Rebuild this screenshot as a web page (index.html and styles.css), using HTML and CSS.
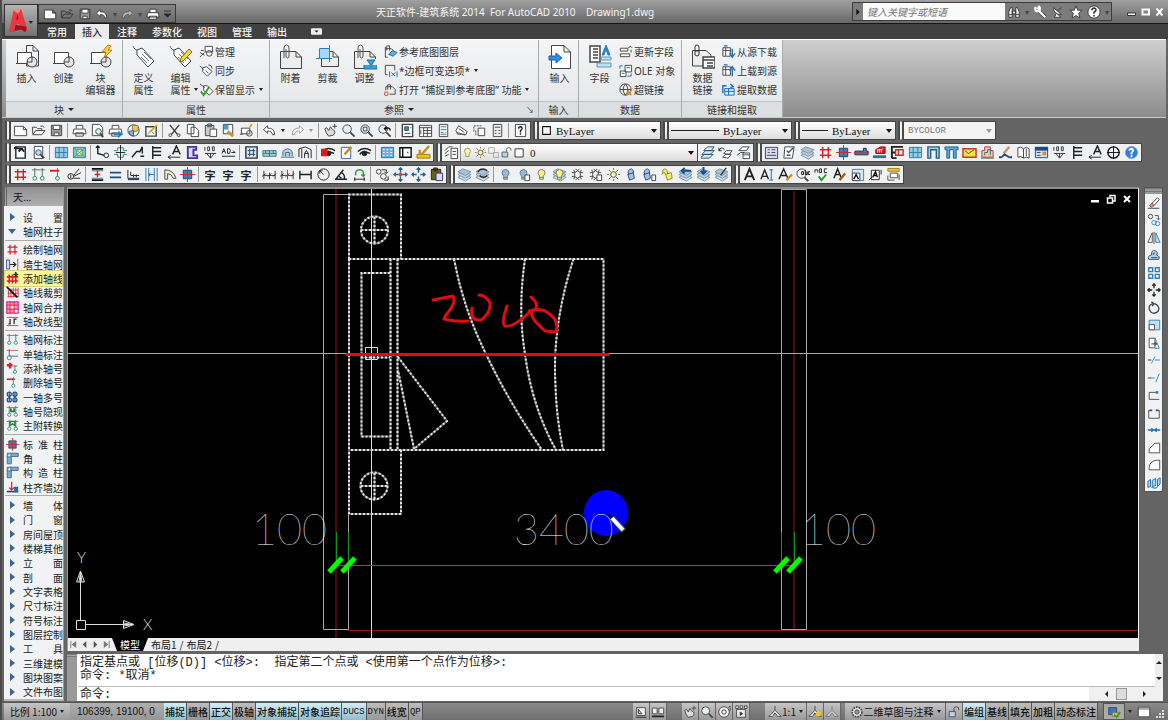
FILE: index.html
```html
<!DOCTYPE html>
<html lang="zh-CN">
<head>
<meta charset="utf-8">
<title>天正软件-建筑系统 2014 For AutoCAD 2010 Drawing1.dwg</title>
<link rel="stylesheet" href="styles.css">
</head>
<body>
<svg class="sprite" aria-hidden="true">
<symbol id="new" viewBox="0 0 16 16"><path fill="#fff" d="M1.500 3.500H11L14.500 7V13.500H1.500ZM11 3.500V7H14.500"/></symbol>
<symbol id="open" viewBox="0 0 16 16"><path d="M2 12.500L1.500 4.500H5.500L7 6H11.500V8M2 12.500L5 8H15L11.500 12.500ZM10 3.500Q13 2 14 5"/></symbol>
<symbol id="save" viewBox="0 0 16 16"><path fill="#9a9a9a" d="M2.500 2.500H13.500V13.500H2.500Z"/><path fill="#fff" d="M4.500 2.500H11.500V7H4.500ZM5.500 10.500H10.500V13.500H5.500Z"/></symbol>
<symbol id="print" viewBox="0 0 16 16"><path fill="#fff" d="M4.500 6V2.500H11.500V6M2 6.500H14L15 11.500H1ZM4 10.500H12V14H4Z"/></symbol>
<symbol id="undo" viewBox="0 0 16 16"><path fill="#fff" d="M1.500 7L6 3V5.500Q13.500 5 13.500 12.500H11Q11 8.500 6 8.500V11Z"/></symbol>
<symbol id="redo" viewBox="0 0 16 16"><path fill="#fff" d="M14.500 7L10 3V5.500Q2.500 5 2.500 12.500H5Q5 8.500 10 8.500V11Z"/></symbol>
<symbol id="zoom" viewBox="0 0 16 16"><circle fill="#e8f2fa" cx="6.500" cy="6.500" r="4.500"/><path stroke-width="2" d="M10 10L14.500 14.500"/></symbol>
<symbol id="pan" viewBox="0 0 16 16"><path fill="#ddd" d="M2 6L4 5L6 8L8 4L10 7L12 8Q14 10 11 13L6 14Q3 11 2 6Z"/><path d="M12.500 1V6M10 3.500H15"/></symbol>
<symbol id="layers" viewBox="0 0 16 16"><g stroke="#7a98ad"><path fill="#cfdce6" d="M1 11L6 8L15 11L9 15Z"/><path fill="#bfd0de" d="M1 8L6 5L15 8L9 12Z"/><path fill="#a9c2d4" d="M1 5L6 2L15 5L9 9Z"/></g></symbol>
<symbol id="bulb" viewBox="0 0 16 16"><path d="M6 10Q3 6 5 4Q8 1 11 4Q13 6 10 10V13H6ZM6 11H10" stroke="#777"/></symbol>
<symbol id="hash" viewBox="0 0 16 16"><path stroke="#d3232c" stroke-width="1.500" d="M5 2V14M11 2V14M2 5H14M2 11H14"/></symbol>
<symbol id="column" viewBox="0 0 16 16"><path fill="#3f7db8" stroke="#245" d="M3.500 3.500H12.500V12.500H3.500Z"/><path stroke="#d3232c" d="M8 0V16M0 8H16"/></symbol>
<symbol id="pins" viewBox="0 0 16 16"><path stroke="#c44" d="M1 3H15"/><path stroke="#2a806a" d="M4 1V10M12 1V10"/><g stroke="#2a806a"><circle cx="4" cy="12" r="2"/><circle cx="12" cy="12" r="2"/></g></symbol>
<symbol id="dim" viewBox="0 0 16 16"><path stroke="#333" d="M2 4V13M14 4V13M2 9H14M8 6V13M0 10L4 7M6 10L10 7M12 10L15 7"/></symbol>
<symbol id="chair" viewBox="0 0 16 16"><path stroke="#222" stroke-width="1.500" d="M4 1V15M4 3H13M4 7H13M4 11H13"/></symbol>
<symbol id="markA" viewBox="0 0 16 16"><path stroke="#222" stroke-width="1.500" d="M6 10L10 1L14 10M8 7H12"/><path stroke="#222" d="M1 13H14M1 13L4 11M1 13L4 15"/></symbol>
<symbol id="level" viewBox="0 0 16 16"><path stroke="#333" d="M2 2V6M5 2H7V6H5ZM10 2H12V6H10ZM2 9H14M4 9L8 14L12 9M8 9V14"/></symbol>
<symbol id="window" viewBox="0 0 16 16"><path fill="#8fcbe6" stroke="#367c9d" d="M1.500 2.500H14.500V13.500H1.500ZM5.500 2V14M10.500 2V14M1 8H14"/></symbol>
<symbol id="sun" viewBox="0 0 16 16"><circle fill="#fff6a0" cx="8" cy="8" r="3"/><path stroke="#776b3a" d="M8 1V3M8 13V15M1 8H3M13 8H15M3 3L5 5M11 11L13 13M3 13L5 11M11 5L13 3"/></symbol>
<symbol id="lock" viewBox="0 0 16 16"><path fill="#bcd2e5" stroke="#356" d="M2.500 7.500H9.500V13.500H2.500Z"/><path d="M8 7V4Q8 2 11 2Q14 2 13.500 6"/></symbol>
<symbol id="snow" viewBox="0 0 16 16"><path d="M6 2L8 4L10 2M6 14L8 12L10 14M2 6L5 6L4 3M14 10L11 10L12 13M2 10L5 10L4 13M14 6L11 6L12 3M8 4L5 6V10L8 12L11 10V6Z"/></symbol>
<symbol id="eye" viewBox="0 0 16 16"><path stroke="#222" stroke-width="1.500" d="M1 7Q7 1 15 6M3 10Q5 5 14 9"/><circle fill="#222" stroke="#222" cx="8" cy="9" r="2.500"/></symbol>
<symbol id="sheet" viewBox="0 0 16 16"><path fill="#eef4f8" d="M3.500 1.500H12.500V14.500H3.500Z"/><path stroke="#47799c" d="M5 4H11M5 7H11M5 10H8M10 10H11M5 12H11"/></symbol>
<symbol id="letA" viewBox="0 0 16 16"><path stroke="#222" stroke-width="2" d="M3 14L8 2L13 14M5 10H11"/></symbol>
<symbol id="pin1" viewBox="0 0 16 16"><path stroke="#c22" stroke-width="2" d="M1 4H11"/><path stroke="#2a806a" d="M9 1V10"/><circle stroke="#2a806a" cx="9" cy="12" r="2"/></symbol>
<symbol id="corner" viewBox="0 0 16 16"><path fill="#79add1" stroke="#36607e" d="M1.500 1.500H15V5.500H6.500V14.500H1.500ZM1 6H6V1"/></symbol>
<symbol id="four" viewBox="0 0 16 16"><g stroke="#214f93" stroke-width="1.500"><circle cx="4" cy="4" r="2.500"/><circle cx="11" cy="4" r="2.500"/><circle cx="4" cy="11" r="2.500"/><circle cx="11" cy="11" r="2.500"/><path d="M4 2V13M11 2V13"/></g></symbol>
<symbol id="move" viewBox="0 0 16 16"><path d="M8 1V6M8 10V15M1 8H6M10 8H15M6 3L8 1L10 3M6 13L8 15L10 13M3 6L1 8L3 10M13 6L15 8L13 10"/></symbol>
<symbol id="area" viewBox="0 0 16 16"><path fill="#d31f28" stroke="#a00" d="M4 9V5L9 2H14V9Z"/><path stroke="#fff" d="M6 8V5H10V8M8 5V8M11 4H12"/><path stroke="#28749e" stroke-width="3" d="M1 12.500H15"/></symbol>
<symbol id="tag" viewBox="0 0 24 26"><path stroke="#666" d="M1 2Q2 6 8 7"/><path fill="#fff" d="M5 6L10 4L22 17L16 23L5 11Z"/><path stroke="#777" d="M10 10L17 17M9 13L15 19M12 8L19 15"/></symbol>
<symbol id="block" viewBox="0 0 24 26"><path fill="#fff" d="M2.500 8.500H16.500V19.500H2.500ZM1 19.500H4"/><circle fill="#e6e6e6" cx="17" cy="18" r="5"/><path d="M12 18H17V12"/></symbol>
<symbol id="clip" viewBox="0 0 24 26"><path fill="#eee" d="M1.500 7.500H17L22.500 13V24.500H1.500ZM17 7.500V13H22.500"/><path stroke="#555" d="M5 14V4Q5 1 7.500 1Q10 1 10 4V12Q10 14 8.500 14Q7 14 7 12V5"/></symbol>
<symbol id="man" viewBox="0 0 16 16"><path fill="#f4f4f4" d="M8 1V6L1 13H5L8 9L11 13H15L8 6"/></symbol>
</svg>

<div class="app">
<header class="top">
  <button class="logo" aria-label="应用程序菜单"><svg viewBox="0 0 32 32"><path fill="#e8383f" d="M3 28L8 5L16 3L23 26L16 25L14 19L10 20L9 27Z"/><path fill="#a80e19" d="M11 15L13 14L13 11L12 9ZM3 28L9 27L10 20L22 22L21 28L16 25Z"/><path fill="#ff8a8c" d="M8 5L16 3L13 8Z"/><path fill="#222" d="M24 16H29L26.500 19Z"/></svg></button>
  <div class="titlebar">
    <nav class="qat" aria-label="快速访问">
      <button title="新建"><svg><use href="#new"/></svg></button>
      <button title="打开"><svg><use href="#open"/></svg></button>
      <button title="保存"><svg><use href="#save"/></svg></button>
      <button title="放弃"><svg><use href="#undo"/></svg></button>
      <button class="mini" title="放弃列表">▾</button>
      <button class="off" title="重做"><svg><use href="#redo"/></svg></button>
      <button class="mini" title="重做列表">▾</button>
      <button title="打印"><svg><use href="#print"/></svg></button>
      <button class="more" title="自定义"><svg viewBox="0 0 10 10"><path d="M2 2H9"/><path fill="#222" d="M2 5H9L5.500 8Z"/></svg></button>
    </nav>
    <h1>天正软件-建筑系统 2014&nbsp; For AutoCAD 2010&nbsp;&nbsp;&nbsp; Drawing1.dwg</h1>
    <div class="search">
      <button class="mini2" title="展开"><svg viewBox="0 0 10 10"><path fill="#111" stroke="none" d="M3 1L7 5L3 9Z"/></svg></button>
      <input type="text" aria-label="搜索" placeholder="键入关键字或短语">
      <button title="搜索"><svg viewBox="0 0 16 16"><path fill="#eee" d="M2 14V8L4 3H6V14ZM14 14V8L12 3H10V14ZM6 7H10V10H6ZM2 11H6M10 11H14"/></svg></button>
      <button class="mini" title="搜索选项">▾</button>
      <button title="速博"><svg viewBox="0 0 16 16"><path stroke="#333" stroke-width="4" d="M7 7L14 14"/><path stroke="#fff" stroke-width="2.500" d="M7 7L14 14M3 2Q1 8 7 7Q9 4 7 2L5 5"/></svg></button>
      <button title="通讯中心"><svg viewBox="0 0 16 16"><path fill="#fff" d="M3 3Q3 11 12 11ZM7 7L12 3M6 10L4 14H11L8 11"/></svg></button>
      <button title="收藏夹"><svg viewBox="0 0 16 16"><path fill="#fff" d="M8 1L10 6H15L11 9.500L12.500 15L8 12L3.500 15L5 9.500L1 6H6Z"/></svg></button>
      <button title="帮助"><svg viewBox="0 0 16 16"><circle fill="#fff" cx="8" cy="8" r="7"/><path stroke-width="1.800" d="M5.500 6Q6 3.500 8 3.500Q11 4 10 6.500L8 8.500V10M8 11.500V13"/></svg></button>
      <button class="mini" title="帮助选项">▾</button>
    </div>
    <div class="winctl">
      <button title="最小化"><svg viewBox="0 0 10 10"><path fill="#fff" d="M1 6H9V8.500H1Z"/></svg></button>
      <button title="还原"><svg viewBox="0 0 10 10"><path stroke="#fff" stroke-width="2" d="M2 2.500H8.500V7.500H2Z"/></svg></button>
      <button title="关闭"><svg viewBox="0 0 10 10"><path stroke="#fff" stroke-width="2" d="M2 1.500L8 8.500M8 1.500L2 8.500"/></svg></button>
    </div>
  </div>
  <nav class="tabs">
    <button>常用</button><button class="on">插入</button><button>注释</button><button>参数化</button><button>视图</button><button>管理</button><button>输出</button>
    <button class="fold" title="最小化功能区"><svg viewBox="0 0 10 6"><rect fill="#eee" stroke="none" width="10" height="6" rx="1"/><path fill="#222" stroke="none" d="M3 2H7L5 4Z"/></svg></button>
  </nav>
</header>

<section class="ribbon">
  <div class="panel p-block"><div class="body">
    <button class="big"><svg viewBox="0 0 24 26"><path fill="#f6f6f6" d="M11.500 1.500H18L23.500 7V22H11.500ZM18 1.500V7H23.500"/><use href="#block"/></svg>插入</button>
    <button class="big"><svg><use href="#block"/></svg>创建</button>
    <button class="big"><svg viewBox="0 0 24 26"><use href="#block"/><path fill="#ffd23a" stroke="#c77a12" d="M19 1L13 8H17L15 14L23 6H19L22 2Z"/></svg><span>块<br>编辑器</span></button>
  </div><h2>块 <i class="dn"></i></h2></div>
  <div class="panel p-attr"><div class="body">
    <button class="big"><svg><use href="#tag"/></svg><span>定义<br>属性</span></button>
    <button class="big"><svg viewBox="0 0 24 26"><use href="#tag"/><path fill="#ffd23a" stroke="#8a6a10" d="M20 5L23 8L14 17L11 18L12 14Z"/></svg><span class="drop">编辑<br>属性</span></button>
    <div class="stack">
      <button><svg viewBox="0 0 16 16"><path fill="#fff" d="M6.500 2.500H14.500V8.500H6.500Z"/><circle cx="11" cy="10" r="3"/><path d="M1 14L6 9M1 9L6 12M2 7H5"/></svg>管理</button>
      <button><svg viewBox="0 0 16 16"><path fill="#fff" d="M4 5L8 4L14 9L9 14L4 9Z"/><path d="M1 3L5 7M10 2Q14 2 14 6M7 8L10 11"/></svg>同步</button>
      <button><svg viewBox="0 0 16 16"><path fill="#fff" d="M5 4L9 4L15 10L11 14L5 9Z"/><path d="M1 2L6 6"/><path stroke="#3a9a2a" stroke-width="2" d="M2 10L5 14L11 5"/></svg>保留显示 <i class="dn"></i></button>
    </div>
  </div><h2>属性</h2></div>
  <div class="panel p-ref"><div class="body">
    <button class="big"><svg><use href="#clip"/></svg>附着</button>
    <button class="big"><svg viewBox="0 0 24 26"><path fill="#eee" d="M5.500 7.500H17L22.500 13V22.500H5.500ZM17 7.500V13H22.500"/><path fill="#a7d8f5" stroke="#2384c4" d="M3.500 4.500H13.500V14.500H3.500ZM0 14.500H16M13.500 1V18"/></svg>剪裁</button>
    <button class="big"><svg viewBox="0 0 24 26"><use href="#clip"/><path fill="#eee" stroke="none" d="M11 15H24V26H11Z"/><path fill="#39a0e0" stroke="#1c6ba5" d="M14 16H22L19 20V22H17V20ZM11 21V25H24V21"/></svg>调整</button>
    <div class="stack">
      <button><svg viewBox="0 0 16 16"><path d="M2.500 3V14H5M2.500 5H9L12 8M4 7V2H7V7"/><path fill="#5bb0e8" stroke="#1c6ba5" d="M6 11L10 7L15 9L11 13Z"/></svg>参考底图图层</button>
      <button><svg viewBox="0 0 16 16"><path d="M2.500 2.500H12.500V8M2.500 2.500V12.500H5"/><path stroke="#2070b0" d="M7 9V15M15 9V15M9 10L13 14M13 10L9 14"/></svg>*边框可变选项* <i class="dn"></i></button>
      <button><svg viewBox="0 0 16 16"><path d="M3 9V5H10L13 8V13H7M5 8V3H8V8"/><circle stroke="#c33" cx="3.500" cy="12.500" r="2"/></svg>打开 “捕捉到参考底图” 功能 <i class="dn"></i></button>
    </div>
  </div><h2>参照 <i class="dn"></i><span class="launch">↘</span></h2></div>
  <div class="panel p-imp"><div class="body">
    <button class="big"><svg viewBox="0 0 24 26"><path fill="#fff" d="M3.500 1.500H16L22.500 8V24.500H3.500ZM16 1.500V8H22.500"/><path fill="#2f8ae8" stroke="#1560b0" d="M1 12H8V9L14 14L8 19V16H1Z"/></svg>输入</button>
  </div><h2>输入</h2></div>
  <div class="panel p-data"><div class="body">
    <button class="big"><svg viewBox="0 0 24 26"><path fill="#fff" stroke-width="1.500" d="M2 2H12V18H2Z"/><path stroke-width="1.500" d="M5 5H10M5 8H10M5 11H10M5 14H10"/><path fill="#2b7fc4" stroke="#2b7fc4" d="M14 11L18 1L22 11L20 11L18 5L16 11Z"/><path fill="#bfe0f5" stroke="#69a" d="M13 13H23V16H13ZM9 19H23V23H9Z"/></svg>字段</button>
    <div class="stack">
      <button><svg viewBox="0 0 16 16"><path fill="#fff" d="M2.500 4.500H10.500V7.500H2.500ZM2.500 10.500H12.500V13.500H2.500Z"/><path d="M11 4Q14 1 15 4M14 6V9"/></svg>更新字段</button>
      <button><svg viewBox="0 0 16 16"><path fill="#fff" d="M7.500 2.500H14.500V9.500H7.500ZM2.500 8.500H8.500V14.500H2.500Z"/><path stroke="#2070b0" d="M2 6V3H5M14 11V14H10M4 11H7M9 5H13"/></svg>OLE 对象</button>
      <button><svg viewBox="0 0 16 16"><circle fill="#eee" cx="8" cy="8" r="6"/><path d="M8 2Q3 8 8 14M8 2Q13 8 8 14M2 8H14"/><path stroke="#d88a1c" stroke-width="2" d="M9 13L11 10L14 14"/></svg>超链接</button>
    </div>
  </div><h2>数据</h2></div>
  <div class="panel p-link"><div class="body">
    <button class="big"><svg viewBox="0 0 24 26"><path fill="#eee" d="M1.500 6.500H15L20 11V22H1.500Z"/><path fill="#fff" stroke-width="1.500" d="M12 13H24V24H12ZM12 16H24M16 19H22M16 22H22"/><path stroke="#333" d="M4 11V3Q4 1 6 1Q8 1 8 3V10Q8 12 6 12ZM4 7H8"/></svg><span>数据<br>链接</span></button>
    <div class="stack">
      <button><svg viewBox="0 0 16 16"><path fill="#fff" d="M2 4H10V13H2ZM2 7H10M5 4V13"/><path stroke="#1c6cc0" stroke-width="1.500" d="M12 5V13M9 10L12 14L15 10M3 2H7"/></svg>从源下载</button>
      <button><svg viewBox="0 0 16 16"><path fill="#fff" d="M2 4H10V13H2ZM2 7H10M5 4V13"/><path stroke="#1c6cc0" stroke-width="1.500" d="M12 14V6M9 8L12 4L15 8M3 2H7"/></svg>上载到源</button>
      <button><svg viewBox="0 0 16 16"><path fill="#d7ebfa" stroke="#1c6cc0" d="M4 7H14V14H4ZM4 10H14M8 7V14"/><path stroke="#1c6cc0" stroke-width="1.500" d="M2 12V4H6M10 2L13 5L10 6"/></svg>提取数据</button>
    </div>
  </div><h2>链接和提取</h2></div>
</section>

<section class="rows">
<div class="row">
  <div class="strip">
    <button title="新建"><svg><use href="#new"/></svg></button><button title="打开"><svg><use href="#open"/></svg></button><button title="保存"><svg><use href="#save"/></svg></button><hr>
    <button title="打印"><svg><use href="#print"/></svg></button>
    <button title="打印预览"><svg viewBox="0 0 16 16"><path fill="#fff" d="M2.500 1.500H10L13.500 5V13.500H2.500Z"/><circle fill="#dff" cx="9" cy="9" r="3"/><path stroke-width="2" d="M11 11L14 15"/></svg></button>
    <button title="发布"><svg viewBox="0 0 16 16"><use href="#print"/><path fill="#2a7fd0" stroke="none" d="M6 11H11V8L16 12L11 16V13H6Z"/></svg></button>
    <button title="三维DWF"><svg viewBox="0 0 16 16"><circle fill="#e8f4fa" cx="8" cy="8" r="6"/><path fill="#f2c542" stroke="#876" d="M7 2L13 3V8L7 10Z"/><path fill="#7db8dd" stroke="#367" d="M3 9L8 8V14L4 12Z"/></svg></button>
    <button title="图纸"><svg viewBox="0 0 16 16"><path fill="#fff" stroke-width="1.500" d="M2 4H13V14H2Z"/><path stroke="#3a9a4a" d="M4 12L7 8L11 12"/><path stroke="#d9a520" stroke-width="2" d="M7 9L14 2"/></svg></button><hr>
    <button title="剪切"><svg viewBox="0 0 16 16"><path stroke-width="1.500" d="M3 2L11 12M13 2L5 12"/><circle cx="3.500" cy="13" r="1.500"/><circle cx="12.500" cy="13" r="1.500"/></svg></button>
    <button title="复制"><svg viewBox="0 0 16 16"><path fill="#fff" d="M2.500 1.500H9.500V11.500H2.500ZM6.500 4.500H11L14.500 8V14.500H6.500Z"/></svg></button>
    <button title="粘贴"><svg viewBox="0 0 16 16"><path fill="#ccc" d="M2.500 2.500H11.500V13.500H2.500ZM5 1H9V4H5Z"/><path fill="#fff" d="M7.500 6.500H14.500V14.500H7.500Z"/></svg></button>
    <button title="特性匹配"><svg viewBox="0 0 16 16"><path fill="#fff" d="M2.500 1.500H12.500V11.500H2.500Z"/><path fill="#4c9ad0" stroke="none" d="M3 2H8V7H3Z"/><path stroke="#c8902a" stroke-width="3" d="M7 9L13 14"/></svg></button>
    <button title="块编辑器"><svg viewBox="0 0 16 16"><path fill="#fff" d="M2.500 5.500H11.500V11.500H2.500ZM1 12H4"/><circle cx="11" cy="11" r="3"/><path stroke="#e0a820" stroke-width="2" d="M14 1L11 5"/></svg></button><hr>
    <button title="放弃"><svg><use href="#undo"/></svg></button><button class="arr" title="放弃列表"><i class="dn"></i></button>
    <button class="off" title="重做"><svg><use href="#redo"/></svg></button><button class="arr off" title="重做列表"><i class="dn"></i></button><hr>
    <button title="平移"><svg><use href="#pan"/></svg></button><button title="缩放"><svg><use href="#zoom"/></svg></button>
    <button title="窗口缩放"><svg viewBox="0 0 16 16"><use href="#zoom"/><path d="M4.500 4.500H8.500V8.500H4.500Z"/></svg></button>
    <button title="缩放上一个"><svg viewBox="0 0 16 16"><use href="#zoom"/><path stroke="#111" stroke-width="1.500" d="M14 8Q14 4 8 6M10 4L8 6L10 8"/></svg></button><hr>
    <button title="特性"><svg viewBox="0 0 16 16"><path fill="#fff" stroke-width="1.500" d="M2.500 1.500H13.500V14.500H2.500Z"/><path fill="#4a8a78" stroke="#357" d="M5 4H9V8H5Z"/><path d="M5 11H11M11 5H12"/></svg></button>
    <button title="设计中心"><svg viewBox="0 0 16 16"><path fill="#fff" d="M1.500 2.500H14.500V14.500H1.500ZM1 5H15M6 5V14M10 5V14M6 8H14M6 11H14M3 7V12"/></svg></button>
    <button title="工具选项板"><svg><use href="#sheet"/></svg></button>
    <button title="图纸集"><svg viewBox="0 0 16 16"><path fill="#fff" d="M2 8L5 3L14 9L13 12H4ZM3 10L12 13M5 6L11 10"/></svg></button>
    <button title="标记集"><svg viewBox="0 0 16 16"><path fill="#fff" d="M6.500 5.500H13.500V13.500H6.500Z"/><path stroke-dasharray="2 1" d="M2 9V3H11M4 13V7"/></svg></button>
    <button title="计算器"><svg viewBox="0 0 16 16"><path fill="#eee" d="M3.500 1.500H12.500V14.500H3.500ZM5 4.500H11M5 8H7M9 8H11M5 11H7M9 11H11"/></svg></button><hr>
    <button title="帮助"><svg viewBox="0 0 16 16"><path fill="#fff" d="M2.500 1.500H13.500V14.500H2.500Z"/><path stroke="#222" stroke-width="1.500" d="M6 6Q6 4 8 4Q11 5 9 7L8 8.500V10M8 11V12.500"/></svg></button>
  </div>
  <label class="combo c-color"><svg viewBox="0 0 10 10"><path fill="#fff" stroke="#111" d="M1.500 1.500H8.500V8.500H1.500Z"/></svg><select aria-label="颜色"><option>ByLayer</option></select></label>
  <label class="combo c-line"><b></b><select aria-label="线型"><option>ByLayer</option></select></label>
  <label class="combo c-weight"><b></b><select aria-label="线宽"><option>ByLayer</option></select></label>
  <label class="combo c-plot"><select aria-label="打印样式" disabled><option>BYCOLOR</option></select></label>
</div>

<div class="row">
  <div class="strip">
    <button title="图形导出"><svg viewBox="0 0 16 16"><path fill="#fff" stroke="#222" stroke-width="1.500" d="M3 2H13V14H3Z"/><path stroke="#222" stroke-width="2" d="M1 3L9 4L6 7M9 4L12 7"/></svg></button>
    <button title="预览"><svg viewBox="0 0 16 16"><path fill="#fff" d="M3.500 1.500H12.500V14.500H3.500Z"/><circle fill="#b9d8ee" stroke="#358" cx="8" cy="8" r="3"/><path stroke-width="2" d="M10 10L14 14"/></svg></button><hr>
    <button title="窗"><svg><use href="#window"/></svg></button>
    <button title="门窗"><svg viewBox="0 0 16 16"><path fill="#7fc4df" stroke="#367c9d" d="M1.500 2.500H14.500V13.500H1.500Z"/><path stroke="#5a9a70" fill="#f2f080" d="M5 5H11V11H5ZM2 3L14 13M14 3L2 13"/></svg></button><hr>
    <button title="坐标"><svg viewBox="0 0 16 16"><path stroke="#222" stroke-width="1.500" d="M3 1V9L10 11M1 3L3 1L5 3"/><circle stroke="#222" cx="12" cy="11" r="2.500"/></svg></button>
    <button title="剖切"><svg viewBox="0 0 16 16"><path stroke="#2a8a80" d="M1 6H5V3H11V6H15M1 10H5V13H11V10H15"/><path stroke="#222" d="M8 0V16M3 8H13"/></svg></button>
    <button title="引出"><svg viewBox="0 0 16 16"><path stroke="#222" stroke-width="1.500" d="M1 13L6 7H9M9 8L12 2V9M10 12H14"/></svg></button>
    <button title="做法"><svg><use href="#chair"/></svg></button><button title="箭头"><svg><use href="#markA"/></svg></button>
    <button title="索引"><svg viewBox="0 0 16 16"><path fill="#dcd8f6" stroke="#4534a0" stroke-width="2" d="M3 2H12V5H9V11H13V14H3Z"/></svg></button>
    <button title="标高"><svg><use href="#level"/></svg></button>
    <button title="文字"><svg viewBox="0 0 16 16"><path stroke="#222" d="M1 9L3 4L5 9M2 7H4M7 9V4H9L10 6L9 9ZM1 12H15M11 8H15L13 6"/></svg></button><hr>
    <button title="表格"><svg viewBox="0 0 16 16"><path fill="#d5e8f4" stroke="#234" stroke-width="1.500" d="M2 2H14V14H2Z"/><path stroke="#246" d="M4 6H12M4 10H12M6 4V12M10 4V12"/></svg></button>
    <button title="墙"><svg viewBox="0 0 16 16"><path fill="#9fd0e4" stroke="#377" d="M1 6H15V12H1ZM1 9H15M4 6V9M8 6V12M12 6V9"/></svg></button>
    <button title="立面"><svg viewBox="0 0 16 16"><path fill="#b8d4e0" stroke="#467" d="M3 12V7Q8 1 13 7V12M1 13H15M6 12V8H10V12"/></svg></button>
    <button title="房屋"><svg viewBox="0 0 16 16"><path stroke="#222" d="M1 13V4L8 2L14 5V14M4 4V14M7 14V9H11V14M7 9L9 6L11 9"/></svg></button><hr>
    <button title="隐藏"><svg viewBox="0 0 16 16"><use href="#eye"/><path fill="#e01818" stroke="none" d="M0 4H7V12H0Z"/></svg></button>
    <button title="编辑"><svg viewBox="0 0 16 16"><path fill="#fff" stroke="#36a" d="M2.500 2.500H12.500V14.500H2.500Z"/><path stroke="#c98a1a" stroke-width="2.500" d="M6 10L13 2"/></svg></button>
    <button title="显示"><svg><use href="#eye"/></svg></button><hr>
    <button title="填充"><svg viewBox="0 0 16 16"><path fill="#6fb0dc" stroke="#2a6ea5" d="M1.500 2.500H14.500V13.500H1.500Z"/><path stroke="#fff" stroke-dasharray="2 2" d="M3 5H13M3 8H13M3 11H13"/></svg></button>
    <button title="边界"><svg viewBox="0 0 16 16"><path fill="#fff" stroke="#111" stroke-width="1.500" d="M2 3H14V13H2ZM5 3V13M10 8H11"/></svg></button>
    <button title="测量"><svg viewBox="0 0 16 16"><path fill="#f0c020" stroke="#a87a08" d="M1 10H15V14H1Z"/><path stroke="#c49018" stroke-width="2.500" d="M6 10L14 1M4 5V10"/></svg></button>
  </div>
  <div class="strip">
    <button title="图层特性"><svg viewBox="0 0 16 16"><path fill="#fff" d="M7.500 3.500H14.500V14.500H7.500ZM9 7H13M9 10H13M1 6L5 2H9M1 9L5 6M1 12L5 10"/></svg></button>
    <label class="combo inner"><svg viewBox="0 0 16 16"><path fill="#fff49a" stroke="#887" d="M6 10Q3 6 5 4Q8 1 11 4Q13 6 10 10V13H6Z"/></svg><svg><use href="#sun"/></svg><svg class="off" viewBox="0 0 16 16"><path d="M2 2H9V9H2ZM8 8H14V14H8Z"/></svg><svg><use href="#lock"/></svg><svg viewBox="0 0 16 16"><path fill="#fff" stroke="#111" d="M2.500 3.500H12.500V13.500H2.500Z"/></svg><select aria-label="图层"><option>0</option></select></label>
    <button title="置为当前"><svg viewBox="0 0 16 16"><path fill="#d8eaf6" stroke="#257" d="M1 13L5 10H14L10 14H1M2 10L6 6H15L11 10ZM4 6L8 2H15L12 6Z"/></svg></button>
    <button title="上一图层"><svg viewBox="0 0 16 16"><path fill="#fff" d="M5 13L8 10H14L11 14ZM6 9L9 6H15L12 10Z"/><path stroke="#222" d="M7 5Q3 1 1 6M1 3V6H4"/></svg></button>
    <button title="图层状态"><svg viewBox="0 0 16 16"><path fill="#fff" d="M1 11L5 8H9M3 6L7 2H14L11 6ZM7.500 8.500H14.500V14.500H7.500ZM7 10.500H14"/></svg></button>
  </div>
  <div class="strip">
    <button title="列表"><svg viewBox="0 0 16 16"><path fill="#dcd8ee" stroke="#445" d="M1.500 2.500H14.500V14.500H1.500ZM4 5H6M8 5H12M8 8H12M4 8H6M3 11H13"/></svg></button>
    <button title="清单"><svg viewBox="0 0 16 16"><path fill="#fff" d="M3 2H13L11 14H2Z"/><path stroke="#555" stroke-width="1.500" d="M5 6L7 8L12 3M5 11H9"/></svg></button>
    <button title="图层"><svg><use href="#layers"/></svg></button><button title="轴网"><svg><use href="#hash"/></svg></button><button title="柱子"><svg><use href="#column"/></svg></button>
    <button title="墙体"><svg viewBox="0 0 16 16"><path fill="#3d86b8" stroke="#234" d="M1 6.500H10V3.500H13V6.500H15V10.500H1Z"/><path stroke="#c22" d="M0 8.500H16"/></svg></button>
    <button title="面积"><svg><use href="#area"/></svg></button>
    <button title="房间"><svg viewBox="0 0 16 16"><path stroke="#222" stroke-width="2" d="M2 14V2H14M2 8H7M7 14H2"/><path fill="#fff" stroke="#d3232c" stroke-width="1.500" d="M6 5H14V11H6ZM9 5V11"/></svg></button>
    <button title="门窗"><svg><use href="#window"/></svg></button>
    <button title="门"><svg viewBox="0 0 16 16"><path fill="#a9d4e8" stroke="#255f84" stroke-width="1.500" d="M2 14V2H14V14H11V5H5V14Z"/></svg></button>
    <button title="窗套"><svg viewBox="0 0 16 16"><path fill="#5aa9d0" stroke="#235f88" d="M1 2H15V5H13V14H10V5H6V14H3V5H1Z"/></svg></button>
    <button title="信封"><svg viewBox="0 0 16 16"><path fill="#f6e23a" stroke="#c33" stroke-width="1.500" d="M1 4H15V13H1Z"/><path stroke="#555" d="M3 6L7 9L13 5"/></svg></button>
    <button title="楼梯"><svg viewBox="0 0 16 16"><path fill="#f7c6c6" stroke="#b33" d="M5 2H11V6H14V13H2V6H5Z"/><path stroke="#2a7a50" d="M5 11V8H8V5H11V11M1 14H15"/></svg></button>
    <button title="画笔"><svg viewBox="0 0 16 16"><path stroke="#c79a60" stroke-width="2.500" d="M6 9L12 2"/><path stroke="#247" stroke-width="2" d="M1 13H4M12 13H15M4 13L7 10L12 13"/></svg></button>
    <button title="图书"><svg viewBox="0 0 16 16"><path fill="#fff" d="M2 3Q5 1 8 4V14Q5 11 2 13ZM8 4Q11 1 14 4V14Q11 12 8 14M11 4V12"/></svg></button>
    <button title="面板"><svg viewBox="0 0 16 16"><path fill="#cfe4f4" stroke="#14508c" d="M1.500 2.500H14.500V13.500H1.500Z"/><path fill="#14508c" stroke="none" d="M1 2H15V6H1Z"/><path fill="#f08020" stroke="none" d="M9 7H13V11H9Z"/><path d="M3 8H7M3 11H7"/></svg></button>
    <button title="标高"><svg><use href="#level"/></svg></button><button title="做法"><svg><use href="#chair"/></svg></button><button title="箭头"><svg><use href="#markA"/></svg></button>
    <button title="指北针"><svg viewBox="0 0 16 16"><circle stroke="#111" stroke-width="1.500" cx="8" cy="8" r="6"/><path stroke="#111" d="M8 1V15M1 8H15"/></svg></button>
    <button title="帮助"><svg viewBox="0 0 16 16"><circle fill="#2b7be0" stroke="#8ab" cx="8" cy="8" r="6.500"/><path stroke="#fff" stroke-width="2" d="M5.500 6Q6 4 8 4Q11 5 9 7L8 8.500V10M8 11V13"/></svg></button>
  </div>
</div>

<div class="row">
  <div class="strip">
    <button title="轴网"><svg><use href="#hash"/></svg></button><button title="轴网标注"><svg><use href="#pins"/></svg></button><button title="单轴"><svg><use href="#pin1"/></svg></button>
    <button title="轴号"><svg viewBox="0 0 16 16"><circle stroke="#222" cx="4" cy="10" r="3"/><path stroke="#222" d="M4 8V12M7 9L13 2M7 10L15 6M7 12H14"/></svg></button><hr>
    <button title="墙"><svg viewBox="0 0 16 16"><path stroke="#111" stroke-width="2" d="M2 2H14M2 14H14"/><path stroke="#27809a" d="M2 4H14M2 12H14"/><path stroke="#c22" stroke-width="1.500" d="M8 4V11M5 8H11"/></svg></button>
    <button title="双线墙"><svg viewBox="0 0 16 16"><path stroke="#234f77" stroke-width="2" d="M2 6H14M2 11H14"/></svg></button>
    <button title="墙角"><svg viewBox="0 0 16 16"><path stroke="#222" d="M2 3V12H14M5 5V9H14M8 8V11M11 8V11"/><path stroke="#247" stroke-width="2" d="M2 13H14"/></svg></button>
    <button title="偏移"><svg viewBox="0 0 16 16"><path stroke="#2a7ab8" d="M2 1V15M5 1V15M11 1V15M14 1V15M5 8H11M7 6L5 8L7 10"/></svg></button>
    <button title="弧"><svg viewBox="0 0 16 16"><path fill="#f3f3b4" stroke="#446" d="M3 3V13H6V7Q10 7 12 12H15Q12 3 3 3Z"/></svg></button>
    <button title="柱子"><svg><use href="#column"/></svg></button><hr>
    <button class="zi" title="文字编辑">字</button><button class="zi" title="单行文字">字</button><button class="zi" title="多行文字">字</button><hr>
    <button title="门窗标注"><svg><use href="#dim"/></svg></button>
    <button title="逐点标注"><svg viewBox="0 0 16 16"><use href="#dim"/><path stroke="#d22" d="M8 3V13M5 9H11"/></svg></button>
    <button title="两点标注"><svg viewBox="0 0 16 16"><path stroke="#222" stroke-width="1.500" d="M2 4V13M14 4V13M2 8H14"/></svg></button>
    <button title="半径标注"><svg viewBox="0 0 16 16"><circle stroke="#222" cx="8" cy="8" r="6"/><path stroke="#222" d="M8 8L4 4M4 7V4H7"/></svg></button>
    <button title="角度标注"><svg viewBox="0 0 16 16"><path stroke="#222" stroke-width="1.500" d="M1 13H14M2 13L10 3M8 6Q12 8 11 13M4 9L8 12"/></svg></button>
    <button title="更新"><svg viewBox="0 0 16 16"><path stroke="#2a9a3a" stroke-width="1.500" d="M4 9Q3 3 8 3Q13 3 12 9M10 8L12 10L14 8"/><path stroke="#222" d="M2 13H14M3 11V15M13 11V15"/></svg></button><hr>
    <button title="复制"><svg viewBox="0 0 16 16"><circle cx="4" cy="5" r="2.500"/><circle cx="9" cy="10" r="3"/><path stroke="#222" d="M7 3H12V6M10 5L12 7L14 5M10 14H14V10"/></svg></button>
    <button title="移动"><svg viewBox="0 0 16 16"><g stroke="#2f6090" stroke-width="1.500"><use href="#move"/></g><path stroke="#c33" stroke-width="2" d="M6 8H10M8 6V10"/></svg></button>
    <button title="自由移动"><svg viewBox="0 0 16 16"><g stroke="#1f5f90" stroke-width="1.500"><use href="#move"/></g></svg></button>
    <button title="粘贴"><svg viewBox="0 0 16 16"><path fill="#68621c" stroke="#222" d="M2.500 2.500H12.500V13.500H2.500ZM5 1H9V4H5Z"/><path fill="#dcd8ff" stroke="#336" d="M7.500 6.500H14.500V14.500H7.500Z"/></svg></button>
  </div>
  <div class="strip">
    <button title="图层"><svg><use href="#layers"/></svg></button>
    <button title="图层转换"><svg viewBox="0 0 16 16"><use href="#layers"/><path stroke="#222" stroke-width="1.500" d="M3 5Q8 0 13 4M13 9Q9 13 5 9"/></svg></button><hr>
    <button title="关闭图层"><svg viewBox="0 0 16 16"><g fill="#8cbfe0"><use href="#bulb"/></g></svg></button>
    <button title="隔离"><svg viewBox="0 0 16 16"><g fill="#8cbfe0"><use href="#bulb"/></g><path fill="#fff" d="M9.500 8.500H14.500V14.500H9.500Z"/></svg></button>
    <button title="打开图层"><svg viewBox="0 0 16 16"><g fill="#fff27a"><use href="#bulb"/></g></svg></button>
    <button title="全部打开"><svg viewBox="0 0 16 16"><use href="#layers"/><g fill="#fff27a"><use href="#bulb"/></g></svg></button>
    <button title="冻结"><svg><use href="#snow"/></svg></button>
    <button title="冻结其他"><svg viewBox="0 0 16 16"><use href="#snow"/><path fill="#fff" d="M9.500 8.500H14.500V14.500H9.500Z"/></svg></button>
    <button title="解冻"><svg><use href="#sun"/></svg></button>
    <button title="锁定"><svg viewBox="0 0 16 16"><path fill="#a9c0e4" stroke="#347" d="M4 8L10 6L11 12L6 14ZM5 8Q3 3 8 2Q11 3 10 7"/></svg></button>
    <button title="锁定其他"><svg viewBox="0 0 16 16"><path fill="#a9c0e4" stroke="#347" d="M2 8L8 6L9 12L4 14ZM3 8Q1 3 6 2Q9 3 8 7"/><path fill="#fff" d="M10.500 8.500H14.500V14.500H10.500Z"/></svg></button>
    <button title="解锁"><svg viewBox="0 0 16 16"><path fill="#eff06a" stroke="#998a20" d="M6 8L12 6L13 12L8 14ZM6 8Q4 3 2 8M3 7Q2 2 6 2Q8 3 8 7"/></svg></button>
    <button title="图层恢复"><svg viewBox="0 0 16 16"><use href="#layers"/><path stroke="#124f8c" stroke-width="2" d="M4 4H14M7 1L4 4L7 7"/></svg></button>
    <button title="合并图层"><svg viewBox="0 0 16 16"><use href="#layers"/><path stroke="#124f8c" stroke-width="2" d="M8 0V7M5 4L8 7L11 4"/></svg></button>
    <button title="编辑图层"><svg viewBox="0 0 16 16"><use href="#layers"/><path stroke="#333" stroke-width="1.500" d="M7 9L13 1"/></svg></button>
  </div>
  <div class="strip">
    <button title="文字"><svg><use href="#letA"/></svg></button>
    <button title="单行"><svg viewBox="0 0 16 16"><path stroke="#222" stroke-width="1.500" d="M1 13L5 3L9 13M3 10H8"/><path stroke="#2468b8" d="M12 3V14M10 3H14M10 14H14"/></svg></button>
    <button title="编辑文字"><svg viewBox="0 0 16 16"><path stroke="#222" stroke-width="1.500" d="M1 13L6 2L11 13M3 9H9"/><path stroke="#c89018" stroke-width="2.500" d="M9 14L15 8"/></svg></button>
    <button title="查找"><svg viewBox="0 0 16 16"><circle cx="6" cy="7" r="5"/><path stroke-width="2" d="M9 11L13 15"/><path stroke="#111" d="M6 5H8V8H6ZM10 3V8H12V5M15 5H13V8H15"/></svg></button>
    <button title="拼写检查"><svg viewBox="0 0 16 16"><path stroke="#222" d="M1 6V3H4V6M6 2V6H8V2ZM14 2H11V6H14"/><path stroke="#2a9a2a" stroke-width="2" d="M5 10L8 14L13 8"/></svg></button>
    <button title="文字样式"><svg viewBox="0 0 16 16"><path stroke="#222" stroke-width="1.500" d="M2 12L6 2L10 12M4 8H9"/><path stroke="#9a6020" stroke-width="2.500" d="M8 14L14 7"/></svg></button>
    <button title="缩放文字"><svg viewBox="0 0 16 16"><path fill="#d5eaf8" stroke="#3a82b8" d="M2.500 2.500H14.500V14.500H2.500Z"/><path fill="#fff" d="M2.500 6.500H10.500V14.500H2.500Z"/><path stroke="#111" stroke-width="1.500" d="M4 13L6.500 8L9 13"/></svg></button>
    <button title="对正"><svg viewBox="0 0 16 16"><path fill="#fff" stroke="#222" d="M3.500 3.500H12V13.500H3.500ZM1 14L4 11M14 3V8"/><path stroke="#111" stroke-width="1.500" d="M5 11L8 5L10 11M6 9H9"/></svg></button>
    <button title="空间转换"><svg viewBox="0 0 16 16"><path fill="#f0c23a" stroke="#a57d10" d="M2 1.500H14V4.500H2Z"/><path fill="#fff" d="M4.500 6.500H12.500V11.500H4.500ZM2 9V14H9M14 8V14"/></svg></button>
  </div>
</div>
</section>

<main class="work">
  <aside class="side">
    <h2>天...</h2>
    <ul>
      <li><button><i class="rt"></i><span>设 置</span></button></li>
      <li><button><i class="dt"></i><span>轴网柱子</span></button></li>
      <li class="ln"></li>
      <li><button><svg><use href="#hash"/></svg><span>绘制轴网</span></button></li>
      <li><button><svg viewBox="0 0 16 16"><path fill="#cde" stroke="#247" d="M.5 2.500H4.500V13.500H.5Z"/><path stroke="#222" stroke-width="1.500" d="M5 8H11M9 5L12 8L9 11"/><path stroke="#c22" d="M14.500 1V15"/></svg><span>墙生轴网</span></button></li>
      <li class="hot"><button><svg viewBox="0 0 16 16"><path stroke="#d3232c" stroke-width="2" d="M4 3V14M8 3V14M12 3V14M1 6H15M1 11H15"/><path stroke="#141" stroke-width="2" d="M12 0V6M9 3H15"/></svg><span>添加轴线</span></button></li>
      <li><button><svg viewBox="0 0 16 16"><path stroke="#d3232c" d="M3 14V6M6 14V3M9 14V2M12 14V2M15 14V2M2 5H15M2 9H15M2 13H15"/><path stroke="#111" stroke-width="2" d="M1 1L14 14"/></svg><span>轴线裁剪</span></button></li>
      <li><button><svg viewBox="0 0 16 16"><path fill="#ff90b8" stroke="#e020a0" stroke-width="1.500" d="M1 1H15V15H1Z"/><path stroke="#d3232c" d="M5 1V15M10 1V15M1 5H15M1 10H15"/><path fill="#fff" stroke="none" d="M6 6H9V9H6ZM11 11H14V14H11Z"/></svg><span>轴网合并</span></button></li>
      <li><button><svg viewBox="0 0 16 16"><path stroke="#d3232c" d="M1 3H15M1 13H15"/><path stroke="#222" stroke-width="1.500" d="M5 5V11H3M10 11V5H13"/></svg><span>轴改线型</span></button></li>
      <li class="ln"></li>
      <li><button><svg><use href="#pins"/></svg><span>轴网标注</span></button></li>
      <li><button><svg viewBox="0 0 16 16"><path stroke="#c55" d="M1 3H15M4 1V5"/><path stroke="#268" d="M4 4V10H15"/><circle stroke="#2a806a" cx="4" cy="12" r="2.500"/></svg><span>单轴标注</span></button></li>
      <li><button><svg viewBox="0 0 16 16"><path stroke="#d22" stroke-width="3" d="M1 4H8M5 1V8"/><path stroke="#2a806a" d="M11 4V10M8 5H14"/><circle stroke="#2a806a" cx="11" cy="12" r="2"/></svg><span>添补轴号</span></button></li>
      <li><button><svg><use href="#pin1"/></svg><span>删除轴号</span></button></li>
      <li><button><svg><use href="#four"/></svg><span>一轴多号</span></button></li>
      <li><button><svg viewBox="0 0 16 16"><use href="#pins"/><path stroke="#264" stroke-width="2" d="M6 4V8H10V4"/></svg><span>轴号隐现</span></button></li>
      <li><button><svg viewBox="0 0 16 16"><use href="#pins"/><path stroke="#2a8a3a" stroke-width="2" d="M5 3H11V8L8 6L5 8Z"/></svg><span>主附转换</span></button></li>
      <li class="ln"></li>
      <li><button><svg><use href="#column"/></svg><span>标 准 柱</span></button></li>
      <li><button><svg><use href="#corner"/></svg><span>角 柱</span></button></li>
      <li><button><svg><use href="#corner"/></svg><span>构 造 柱</span></button></li>
      <li><button><svg viewBox="0 0 16 16"><path stroke="#246" stroke-width="2" d="M1 13H15"/><path fill="#246f9c" stroke="none" d="M10 7H15V14H10Z"/><path stroke="#d8204a" stroke-width="1.500" d="M7 1V10M4 8L7 11L10 8"/></svg><span>柱齐墙边</span></button></li>
      <li class="ln"></li>
      <li><button><i class="rt"></i><span>墙 体</span></button></li>
      <li><button><i class="rt"></i><span>门 窗</span></button></li>
      <li><button><i class="rt"></i><span>房间屋顶</span></button></li>
      <li><button><i class="rt"></i><span>楼梯其他</span></button></li>
      <li><button><i class="rt"></i><span>立 面</span></button></li>
      <li><button><i class="rt"></i><span>剖 面</span></button></li>
      <li><button><i class="rt"></i><span>文字表格</span></button></li>
      <li><button><i class="rt"></i><span>尺寸标注</span></button></li>
      <li><button><i class="rt"></i><span>符号标注</span></button></li>
      <li><button><i class="rt"></i><span>图层控制</span></button></li>
      <li><button><i class="rt"></i><span>工 具</span></button></li>
      <li><button><i class="rt"></i><span>三维建模</span></button></li>
      <li><button><i class="rt"></i><span>图块图案</span></button></li>
      <li><button><i class="rt"></i><span>文件布图</span></button></li>
    </ul>
  </aside>

  <div class="center">
    <div class="upper">
      <div class="doc">
        <div class="canvas">
          <svg class="draw" role="img" aria-label="双人床平面图"><g transform="translate(-68 -189)">
            <path stroke="#9b1218" d="M336 189V640M794 191V630M348 630.500H1140"/>
            <path stroke="#aaa" d="M348.500 194.500H323.500V629.500H348.500V194M781.500 189.500H806.500V629.500H781.500Z"/>
            <g stroke="#666" stroke-width="2"><path id="bedline" d="M349 259V194.500H401V259M349 259V450M349 259H603.500V450H349M401 450V514H349V450M390.500 259V450M397.500 259V450M390 273H361.500V436.500H390M361 357.500H390M454 259C461 296 472 326 486 354C501 386 520 418 542 450M525 259C519 300 521 330 525 354C530 393 543 427 556 450M573.500 259C560 300 553 345 555.500 385C556 410 560 435 563 450M398 357L447 421L414 449L398 370M361 230H388M374.500 217V244M361 486H388M374.500 473V500"/><circle cx="374.500" cy="230" r="13.500"/><circle cx="374" cy="486" r="13.500"/></g>
            <g stroke="#e4e4e4" stroke-width="2" stroke-dasharray="2 2"><use href="#bedline"/><circle cx="374.500" cy="230" r="13.500"/><circle cx="374" cy="486" r="13.500"/></g>
            <path stroke="#aaa" d="M66 353.500H1140"/>
            <path stroke="#ddd" d="M371.500 189V640M365.500 347.500H377.500V359.500H365.500Z"/>
            <path stroke="#0a9a12" d="M336 565.500H794M336.500 532V565M348.500 532V565M781.500 532V565M794.500 532V565"/>
            <path stroke="#0f0" stroke-width="5" d="M329 572L342 558M342 572L355 558M775 572L788 558M788 572L801 558"/>
            <ellipse cx="606" cy="513" rx="22" ry="23" fill="#00f" stroke="none"/>
            <g class="num"><text x="252" y="545">100</text><text x="514" y="545">3400</text><text x="801" y="545">100</text></g>
            <path stroke="#000" stroke-width="2" d="M608 514L612 518"/><path stroke="#345" stroke-width="6" d="M612 518L624 531"/><path stroke="#fff" stroke-width="4" d="M612 518L623 530"/>
            <path stroke="#e50914" stroke-width="3" stroke-linecap="round" d="M347 354.500H608"/>
            <path stroke="#e50914" stroke-width="3" stroke-linecap="round" stroke-linejoin="round" d="M433 300L453 296Q457 302 446 315L444 319Q456 322 468 321M472 308Q470 321 481 320Q491 313 490 303Q486 295 479 295M507 306Q501 323 505 326Q513 328 531 311M531 297Q541 306 533 311Q527 315 545 331L556 332Q560 319 545 311Q538 308 529 311"/>
            <path stroke="#ddd" d="M76.500 620.500H85.500V629.500H76.500ZM80.500 620V572M76.500 582L80.500 571L84.500 582ZM79 582L80.500 572L82 582M86 624.500H133M123.500 620.500L134 624.500L123.500 628.500ZM124 623L133 624.500L124 626"/>
            <g class="axis"><text x="143" y="630">X</text><text x="77" y="563">Y</text></g>
          </g></svg>
          <div class="docctl">
            <button title="最小化"><svg viewBox="0 0 10 10"><path fill="#fff" stroke="none" d="M1 6H9V8.500H1Z"/></svg></button>
            <button title="还原"><svg viewBox="0 0 10 10"><path stroke="#fff" stroke-width="1.500" d="M1.500 4H6.500V9H1.500ZM4 3V1.500H9V7H7"/></svg></button>
            <button title="关闭"><svg viewBox="0 0 10 10"><path stroke="#fff" stroke-width="2" d="M2 2L8 8M8 2L2 8"/></svg></button>
          </div>
        </div>
        <nav class="layouts">
          <button title="首页"><svg viewBox="0 0 10 10"><path d="M2 1V9"/><path fill="#777" stroke="none" d="M8 1V9L3 5Z"/></svg></button>
          <button title="上一页"><svg viewBox="0 0 10 10"><path fill="#555" stroke="none" d="M7 1V9L3 5Z"/></svg></button>
          <button title="下一页"><svg viewBox="0 0 10 10"><path fill="#555" stroke="none" d="M3 1V9L7 5Z"/></svg></button>
          <button title="末页"><svg viewBox="0 0 10 10"><path d="M8 1V9"/><path fill="#777" stroke="none" d="M2 1V9L7 5Z"/></svg></button>
          <button class="lay on">模型</button><button class="lay">布局1</button><span>/</span><button class="lay">布局2</button><span>/</span>
        </nav>
      </div>
      <div class="modify">
        <div class="grip"></div>
        <button title="删除"><svg viewBox="0 0 16 16"><path fill="#fff" stroke="#333" d="M1 14H14M5 9L12 2L14 4L8 11"/><path fill="#d98c7a" stroke="#8a5040" d="M3 11L6 8L8 11L5 13Z"/></svg></button>
        <button title="复制"><svg viewBox="0 0 16 16"><circle cx="4" cy="4" r="2.500"/><path d="M9 3H13V7M11 6L13 8L15 6"/><g stroke="#2a7fc4"><circle cx="8" cy="11" r="2.500"/><circle cx="12" cy="12" r="2.500"/></g></svg></button>
        <button title="镜像"><svg viewBox="0 0 16 16"><path fill="#fff" d="M6 2V13H1Z"/><path stroke="#2a7fc4" fill="#bfe0f5" d="M10 2V13H15Z"/><path d="M8 1V15"/></svg></button>
        <button title="偏移"><svg viewBox="0 0 16 16"><path fill="#a9d2ee" d="M2 13Q0 9 5 8Q5 2 9 3Q13 4 11 8Q16 10 13 13Z"/><path stroke="#247" d="M5 11H12M7 8Q7 5 9 6"/></svg></button>
        <button title="阵列"><svg viewBox="0 0 16 16"><path stroke="#2a7fc4" stroke-width="1.500" d="M2 2H6.500V6.500H2ZM9.500 2H14V6.500H9.500ZM2 9.500H6.500V14H2ZM9.500 9.500H14V14H9.500Z"/></svg></button>
        <button title="移动"><svg viewBox="0 0 16 16"><g stroke="#222" stroke-width="1.500"><use href="#move"/></g></svg></button>
        <button title="旋转"><svg viewBox="0 0 16 16"><path stroke-width="1.500" d="M7 3Q2 4 2.500 9Q4 14 8 14Q14 13 13.500 8Q12 3 7 3M5 1L8 3L6 6"/></svg></button>
        <button title="缩放"><svg viewBox="0 0 16 16"><path fill="#bfe0f5" stroke="#2a7fc4" d="M2.500 2.500H14.500V13.500H2.500Z"/><path fill="#fff" d="M2.500 7.500H8.500V13.500H2.500Z"/></svg></button>
        <button title="拉伸"><svg viewBox="0 0 16 16"><path fill="#fff" d="M2.500 2.500H9V13.500H2.500Z"/><path stroke="#2a7fc4" d="M9 2L14 14H9"/><path stroke="#222" d="M5 9H11M9 7L11 9L9 11"/></svg></button>
        <button title="修剪"><svg viewBox="0 0 16 16"><path stroke="#222" d="M1 8H5"/><path stroke="#2a7fc4" d="M5 12L9 4M9 8H15"/></svg></button>
        <button title="延伸"><svg viewBox="0 0 16 16"><path stroke="#222" d="M1 8H5"/><path stroke="#2a7fc4" d="M5 8H9M10 13L14 3"/></svg></button>
        <button title="打断于点"><svg viewBox="0 0 16 16"><path d="M12 5H2.500V13H14"/><path stroke="#2a7fc4" stroke-width="3" d="M10 5H13"/></svg></button>
        <button title="打断"><svg viewBox="0 0 16 16"><path d="M4 5H2V14H14V5H12"/><path stroke="#4a3ac0" stroke-width="2" d="M3 5H6M10 5H13"/></svg></button>
        <button title="合并"><svg viewBox="0 0 16 16"><path stroke="#1c6cb0" stroke-width="1.500" d="M1 8H15M5 6L7 8L5 10M11 6L9 8L11 10"/></svg></button>
        <button title="倒角"><svg viewBox="0 0 16 16"><path fill="#fff" d="M2.500 13.500V9L9 2.500H14.500V13.500Z"/></svg></button>
        <button title="圆角"><svg viewBox="0 0 16 16"><path fill="#fff" d="M2.500 13.500V11Q3 3 12 2.500H14.500V13.500Z"/></svg></button>
        <button title="分解"><svg viewBox="0 0 16 16"><path fill="#a9d2ee" stroke="#1c6ca8" d="M1 6L4 4V12L1 13ZM6 5L10 3V11L6 12ZM12 4L15 2V9L12 12ZM5 13L9 14L12 13"/></svg></button>
      </div>
    </div>
    <section class="cmd">
      <div class="handle"></div>
      <div class="log">
        <p>指定基点或 [位移(D)] &lt;位移&gt;:&nbsp; 指定第二个点或 &lt;使用第一个点作为位移&gt;:</p>
        <p>命令: *取消*</p>
      </div>
      <div class="vs"><button title="向上"><i class="up"></i></button><button title="向下"><i class="dn"></i></button></div>
      <label class="prompt">命令:<input type="text" aria-label="命令"></label>
      <div class="hs"><button title="向左"><i class="lt"></i></button><b></b><button title="向右"><i class="rt2"></i></button></div>
    </section>
  </div>
</main>

<footer class="status">
  <button class="scale">比例 1:100 <i class="dn"></i></button>
  <output>106399, 19100, 0</output>
  <div class="modes"><button class="on">捕捉</button><button>栅格</button><button class="on">正交</button><button>极轴</button><button class="on">对象捕捉</button><button class="on">对象追踪</button><button class="on m">DUCS</button><button class="m">DYN</button><button>线宽</button><button class="m">QP</button></div>
  <div class="tools">
    <button title="模型"><svg viewBox="0 0 16 16"><path fill="#eee" d="M3 3H13V12H3Z"/><path stroke="#222" d="M5 5V10H9ZM2 14H14"/></svg></button>
    <button title="快速查看布局"><svg viewBox="0 0 16 16"><path fill="#eee" d="M1.500 3.500H7V10H1.500ZM9 3.500H14.500V10H9Z"/><path stroke="#222" stroke-width="2" d="M1 13H15"/></svg></button>
    <b class="gap"></b>
    <button title="平移"><svg><use href="#pan"/></svg></button><button title="缩放"><svg><use href="#zoom"/></svg></button>
    <button title="控制盘"><svg viewBox="0 0 16 16"><circle fill="#eee" cx="8" cy="8" r="6"/><circle cx="8" cy="8" r="2.500"/><path d="M13 3L15 1V7"/></svg></button>
    <button title="运动"><svg viewBox="0 0 16 16"><path fill="#eee" d="M3 5H13V14H3ZM2 1H5V4H2ZM7 1H10V4H7ZM12 1H15V4H12Z"/><path fill="#222" d="M7 8L10 10L7 12Z"/></svg></button>
    <b class="gap"></b>
    <button class="ratio"><svg><use href="#man"/></svg>1:1 <i class="dn"></i></button>
    <button title="注释可见"><svg viewBox="0 0 16 16"><use href="#man"/><circle fill="#f5c820" stroke="none" cx="12" cy="10" r="3"/></svg></button>
    <button class="dim" title="自动比例"><svg><use href="#man"/></svg></button>
    <button class="ws"><svg viewBox="0 0 16 16"><circle fill="#eee" cx="8" cy="8" r="5.500" stroke-width="2" stroke-dasharray="2 1"/><circle fill="#999" cx="8" cy="8" r="2.500"/></svg>二维草图与注释 <i class="dn"></i></button>
    <button title="锁定"><svg><use href="#lock"/></svg></button>
  </div>
  <div class="modes end"><button class="on">编组</button><button>基线</button><button>填充</button><button>加粗</button><button>动态标注</button></div>
  <button class="boxed" title="状态"><svg viewBox="0 0 16 16"><path fill="#2c7cd0" d="M2 3H11V11H2Z"/><path fill="#ead04a" stroke="#875" d="M6 9H13V13H6Z"/><path stroke="#2a9a2a" stroke-width="2" d="M8 11L11 14L15 8"/></svg></button>
  <button class="arr" title="状态菜单"><i class="dn"></i></button>
  <button class="t18" title="全屏"><svg viewBox="0 0 16 16"><path fill="#fff" d="M1.500 2.500H14.500V13.500H1.500ZM1 4.500H14"/></svg></button>
  <svg class="size" viewBox="0 0 10 10"><path d="M7 1H9M4 4H6M7 4H9M1 7H3M4 7H6M7 7H9"/></svg>
</footer>
</div>
</body>
</html>
```
FILE: styles.css
```css
* { box-sizing: border-box; }
body {
  margin: 0;
  background: #646464;
  color: #333;
  font-family: "Noto Sans CJK SC", sans-serif;
  font-size: 10px;
  line-height: 14px;
}
button, input, select { font: inherit; color: inherit; margin: 0; padding: 0; border: 0; background: none; }
button { display: flex; align-items: center; justify-content: center; white-space: nowrap; }
h1, h2, p, ul { margin: 0; padding: 0; font-size: inherit; font-weight: normal; list-style: none; }
svg { display: block; flex: none; fill: none; stroke: #444; stroke-width: 1; }
i { flex: none; width: 0; height: 0; border: 3px solid transparent; }
i.dn { border-top-color: #222; border-bottom: 0; }
i.up { border-bottom-color: #222; border-top: 0; }
i.lt { border-right-color: #222; border-left: 0; }
i.rt2 { border-left-color: #222; border-right: 0; }
.sprite { position: absolute; width: 0; height: 0; }
.off { opacity: .45; }
.app { display: flex; flex-direction: column; min-height: 100vh; border-left: 2px solid #4b4b4b; }

.top { display: grid; grid-template-columns: 34px 1fr; background: linear-gradient(#a0a0a0, #686868 23px, #222 24px, #414141 24px); padding-left: 2px; }
.logo { grid-row: span 2; align-self: end; height: 33px; margin-bottom: 2px; border: 1px solid #333; background: linear-gradient(#b5b5b5, #727272); }
.logo svg { width: 30px; height: 30px; stroke: none; }
.titlebar { display: flex; height: 24px; align-items: center; justify-content: space-between; border-bottom: 1px solid #161616; }
.titlebar svg { width: 14px; height: 14px; stroke: #333; }
.qat { display: flex; align-self: end; height: 19px; width: 138px; padding: 0 2px; border: 1px solid #3a3a3a; background: linear-gradient(#858585, #6a6a6a); }
.qat button, .search button { width: 18px; }
.titlebar .mini { width: 8px; color: #444; font-size: 8px; }
.qat .more { width: 12px; }
.qat .more svg { width: 10px; height: 10px; }
.titlebar h1 { flex: 1; padding-left: 200px; color: #f4f4f4; font-family: "Noto Sans", "Noto Sans CJK SC", sans-serif; white-space: nowrap; }
.search { display: flex; align-items: center; height: 19px; border: 1px solid #3c3c3c; background: #7c7c7c; }
.search .mini2 { width: 10px; }
.search .mini2 svg { width: 8px; height: 8px; }
.search input { width: 142px; height: 17px; padding: 0 4px; background: #fafafa; font-style: italic; }
.search input::placeholder { color: #777; }
.winctl { display: flex; width: 56px; justify-content: flex-end; padding-right: 3px; gap: 3px; }
.titlebar .winctl svg { width: 11px; height: 10px; }
.tabs { display: flex; height: 15px; gap: 1px; padding-left: 2px; background: #414141; color: #f5f5f5; font-weight: 500; }
.tabs button { min-width: 34px; }
.tabs button:nth-child(4) { min-width: 44px; }
.tabs .on { background: #e9eaeb; color: #333; }
.tabs .fold { margin-left: 4px; }
.tabs .fold svg { width: 11px; height: 7px; }

.ribbon { display: flex; height: 79px; padding-left: 4px; background: linear-gradient(#cfcfcf, #8c8c8c); border-top: 1px solid #fff; border-bottom: 1px solid #c8ccca; margin-right: 2px; }
.panel { display: flex; flex-direction: column; border-right: 1px solid #a9abad; background: #eceeef; }
.body { display: flex; flex: 1; background: linear-gradient(#f4f5f6, #e6e8e9); padding: 2px 0 0 2px; }
.panel h2 { display: flex; align-items: center; justify-content: center; gap: 4px; height: 16px; background: #dcdfe1; border-top: 1px solid #bfc2c4; }
.big { flex: none; flex-direction: column; justify-content: flex-start; width: 37px; padding-top: 2px; line-height: 12px; }
.big svg { width: 24px; height: 26px; margin-bottom: 2px; }
.drop { display: block; }
.drop::after { content: ""; display: inline-block; margin: 0 -7px 3px 3px; border: 2px solid transparent; border-top: 3px solid #222; border-bottom: 0; }
.stack { display: flex; flex-direction: column; }
.stack button { height: 19px; gap: 1px; padding-right: 4px; justify-content: flex-start; font-family: "Noto Sans", "Noto Sans CJK SC", sans-serif; }
.stack svg { width: 15px; height: 15px; }
.stack i, .scale i, .ratio i, .ws i { margin-left: 3px; border-width: 2px; border-top-width: 3px; }
.p-block { width: 117px; }
.p-attr { width: 147px; }
.p-ref { width: 269px; }
.p-imp { width: 40px; }
.p-data { width: 103px; }
.p-link { width: 101px; }
.p-ref h2 { justify-content: flex-end; padding-right: 4px; }
.p-ref .launch { margin-left: 108px; font-size: 8px; }

.rows { display: flex; flex-direction: column; gap: 3px; padding: 3px 0 3px 3px; }
.row { display: flex; height: 19px; gap: 2px; }
.strip, .combo { display: flex; align-items: center; background: #f0f1f2; border: 1px solid #444; border-left: 6px double #4a4a4a; }
.strip { padding-right: 1px; }
.strip button { width: 18px; height: 17px; }
.strip svg { width: 15px; height: 15px; }
.strip .arr, .arr { width: 10px; }
.arr i { border-width: 2px; border-top-width: 3px; }
.strip hr { width: 1px; height: 15px; margin: 0 2px; border: 0; background: #999; }
.strip .zi { font-size: 11px; font-weight: 700; color: #222; }
.combo { font-family: "Liberation Serif", serif; font-size: 11px; color: #111; background: linear-gradient(#fff, #ddd); }
.combo select { flex: 1; min-width: 0; height: 100%; appearance: none; }
.combo::after { content: ""; border: 3px solid transparent; border-top: 4px solid #111; border-bottom: 0; margin-right: 3px; }
.combo svg { width: 11px; height: 11px; margin: 0 4px 0 2px; }
.combo b { width: 48px; height: 1px; background: #222; margin: 0 4px 0 2px; }
.c-color { width: 128px; }
.c-line { width: 129px; }
.c-weight { width: 102px; }
.c-weight b { width: 26px; }
.c-plot { width: 98px; background: #f4f4f4; }
.c-plot select { padding-left: 4px; color: #777; opacity: 1; font-family: "Liberation Mono", monospace; font-size: 9px; }
.c-plot::after { border-top-color: #999; }
.inner { width: 238px; height: 17px; border-width: 0 1px; border-left: 1px solid #888; }
.strip .inner svg { width: 13px; height: 13px; margin: 0; }
.inner select { padding-left: 4px; }

.work { display: flex; flex: 1; padding: 0 5px 1px 2px; gap: 3px; min-height: 0; }
.side { display: flex; flex-direction: column; width: 60px; background: #f1f2f3; border-right: 1px solid #999; border-bottom: 2px solid #bbb; }
.side h2 { height: 19px; padding: 3px 0 0 6px; background: linear-gradient(#909090, #b0b0b0); border-left: 3px double #666; color: #111; }
.side ul { display: flex; flex: 1; flex-direction: column; padding: 4px 1px 0; }
.side li { display: flex; flex: 1; min-height: 14px; }
.side .ln { flex: none; height: 1px; min-height: 0; margin: 1px 0 2px; background: #aaa; }
.side li button { flex: 1; justify-content: flex-start; line-height: 13px; color: #222; }
.side svg { width: 13px; height: 13px; margin: 0 4px 0 1px; }
.side span { width: 40px; text-align: justify; text-align-last: justify; white-space: normal; }
.side .hot { background: #fbf79a; outline: 1px solid #ddd07a; }
.side i.rt { border: 4px solid transparent; border-left: 5px solid #3c6494; border-right: 0; margin: 0 8px 0 5px; }
.side i.dt { border: 4px solid transparent; border-top: 5px solid #3c6494; border-bottom: 0; margin: 0 7px 0 3px; }

.center { display: flex; flex: 1; flex-direction: column; min-width: 0; gap: 3px; }
.upper { display: flex; flex: 1; gap: 5px; align-items: flex-start; }
.doc { display: flex; flex: 1; flex-direction: column; align-self: stretch; min-width: 0; border-right: 1px solid #eee; border-left: 1px solid #999; border-top: 2px solid #8d8f8e; }
.canvas { position: relative; flex: 1; background: #000; overflow: hidden; }
.draw { position: absolute; inset: 0; width: 100%; height: 100%; }
.num text { font-family: Lato, sans-serif; font-size: 43px; font-weight: 100; fill: #fff; stroke: none; }
.axis text { font-family: Lato, sans-serif; font-size: 15px; font-weight: 300; fill: #ddd; stroke: none; }
.docctl { position: absolute; top: 5px; right: 6px; display: flex; gap: 6px; }
.docctl svg { width: 10px; height: 10px; }
.layouts { display: flex; height: 13px; background: #efefef; color: #111; align-items: center; }
.layouts svg { width: 9px; height: 9px; margin: 0 1px; stroke: #777; }
.layouts .lay { padding: 0 3px; }
.layouts .on { background: #000; color: #fff; padding: 0 8px; clip-path: polygon(0 0, 100% 0, 86% 100%, 14% 100%); height: 13px; }
.modify { display: flex; flex-direction: column; width: 19px; background: #f1f2f3; border: 1px solid #555; }
.modify .grip { height: 6px; background: repeating-linear-gradient(#777 0 1px, #999 1px 3px); }
.modify button { height: 17px; }
.modify button:nth-child(odd) { height: 18px; }
.modify svg { width: 14px; height: 14px; }

.cmd { display: grid; grid-template-columns: 11px 1fr 66px 8px; grid-template-rows: 33px 14px; background: #fff; color: #222; font-family: "Liberation Mono", "Noto Sans CJK SC", monospace; font-size: 12px; line-height: 13px; }
.handle { grid-row: span 2; background: linear-gradient(#777 1px, #aaa 1px 2px, #777 2px 3px, #999 3px); margin-right: 1px; }
.log { grid-column: 2 / 4; padding: 3px 0 0 2px; border-bottom: 1px solid #bbb; }
.log p { white-space: nowrap; }
.vs { display: flex; flex-direction: column; justify-content: space-around; background: #eee; }
.prompt { display: flex; align-items: center; padding: 3px 0 0 2px; }
.prompt input { flex: 1; outline: 0; height: 11px; }
.hs { grid-column: 3 / 5; display: flex; align-items: center; gap: 8px; padding-left: 16px; background: #f0f0f0; }
.hs b { width: 11px; height: 12px; margin-right: 8px; border: 1px solid #999; background: #ddd; }

.status { display: flex; align-items: stretch; height: 18px; padding: 0 3px 0 2px; background: linear-gradient(#8a8a8a, #6e6e6e); border-top: 1px solid #555; color: #111; }
.status svg { width: 14px; height: 14px; }
.status .scale { width: 66px; background: linear-gradient(#c5c5c5, #9c9c9c); font-size: 10px; }
.status output { width: 94px; padding: 2px 0 0 7px; background: linear-gradient(#b0b0b0, #969696); font-family: "Liberation Sans", sans-serif; font-size: 10px; white-space: nowrap; }
.modes { display: flex; }
.modes button { padding: 0 1px; border-right: 1px solid #555; background: linear-gradient(#bdbdbd, #989898); font-weight: 500; min-width: 23px; }
.modes .on { background: linear-gradient(#d3edf6, #93bccb); }
.modes .m { font-family: "Liberation Mono", monospace; font-size: 9px; min-width: 14px; }
.tools { display: flex; margin-left: auto; }
.tools button { width: 17px; background: linear-gradient(#c5c5c5, #999); border-right: 1px solid #666; }
.tools .dim svg { opacity: .5; }
.tools .gap { width: 15px; }
.tools .ratio { width: 42px; }
.tools .ws { width: 101px; margin-left: 4px; }
.boxed { width: 22px; margin: 0 0 0 5px; border: 1px solid #555; background: #aaa; }
.t18 { width: 18px; }
.status .size { width: 10px; height: 10px; margin-left: 2px; align-self: flex-end; stroke: #ddd; stroke-width: 2; }
```
